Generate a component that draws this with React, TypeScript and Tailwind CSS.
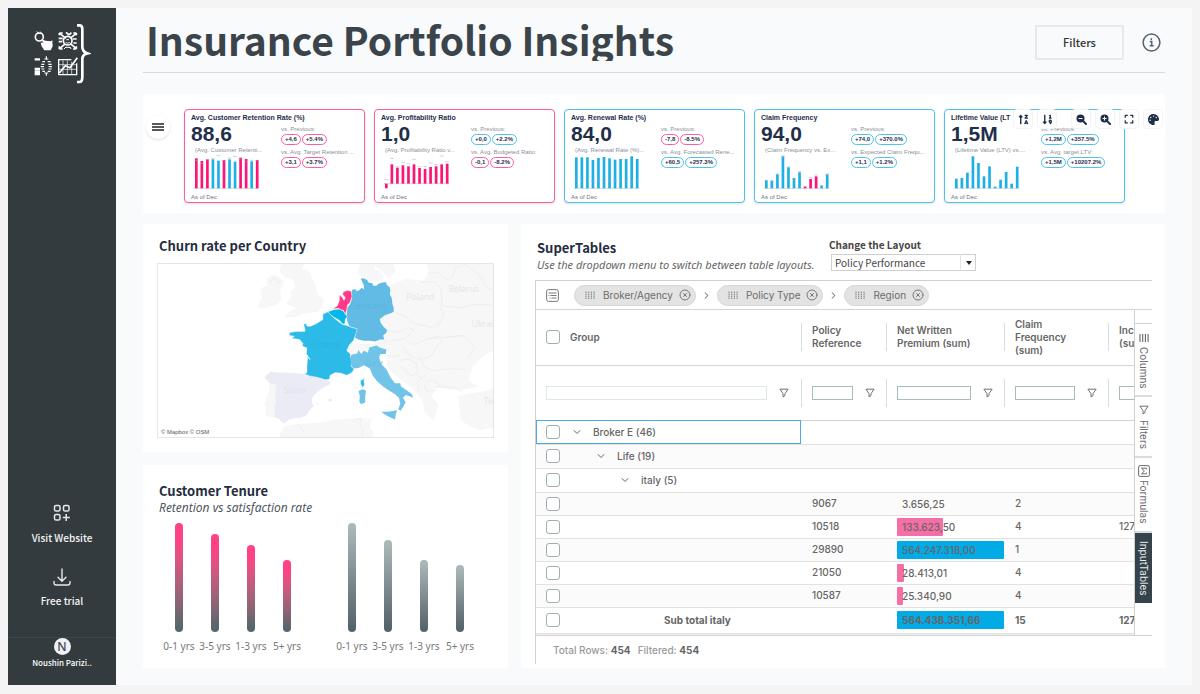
import React, { useState } from 'react';
import { FaExpand, FaPalette, FaSortAlphaUpAlt, FaSortNumericDown } from 'react-icons/fa';
import { ChevronDown, ChevronRight, CircleX } from 'lucide-react';

type Tone = 'pink' | 'blue';

interface Comparison {
  label: string;
  tone: Tone;
  values: string[];
}

interface Kpi {
  title: string;
  value: string;
  caption: string;
  tone: Tone;
  bars: number[];
  // one letter per bar: p = pink, b = blue
  tones: string;
  targets?: number[];
  comparisons: Comparison[];
}

const kpis: Kpi[] = [
  {
    title: 'Avg. Customer Retention Rate (%)',
    value: '88,6',
    caption: '(Avg. Customer Retenti...',
    tone: 'pink',
    bars: [90, 82, 87, 87, 83, 85, 87, 80, 92, 88, 81, 85],
    tones: 'pppbbpbbppbp',
    targets: [84, 75, 86, 90, 98, 83, 91, 96, 88, 80, 84, 83],
    comparisons: [
      { label: 'vs. Previous:', tone: 'pink', values: ['+4,6', '+5.4%'] },
      { label: 'vs. Avg. Target Retention ...', tone: 'pink', values: ['+3,1', '+3.7%'] },
    ],
  },
  {
    title: 'Avg. Profitability Ratio',
    value: '1,0',
    caption: '(Avg. Profitability Ratio v...',
    tone: 'pink',
    bars: [-14, 58, 48, 55, 52, 58, 47, 44, 50, 52, 58, 60],
    tones: 'pppppppppppp',
    targets: [12, 76, 51, 64, 60, 73, 51, 52, 62, 57, 83, 66],
    comparisons: [
      { label: 'vs. Previous:', tone: 'blue', values: ['+0,0', '+2.2%'] },
      { label: 'vs. Avg. Budgeted Ratio:', tone: 'pink', values: ['-0,1', '-8.2%'] },
    ],
  },
  {
    title: 'Avg. Renewal Rate (%)',
    value: '84,0',
    caption: '(Avg. Renewal Rate (%)...',
    tone: 'blue',
    bars: [93, 93, 93, 85, 91, 94, 90, 86, 88, 88, 96, 88],
    tones: 'bbbbbbbbbbbb',
    targets: [24, 23, 24, 22, 23, 24, 23, 24, 22, 22, 18, 24],
    comparisons: [
      { label: 'vs. Previous:', tone: 'pink', values: ['-7,8', '-8.5%'] },
      { label: 'vs. Avg. Forecasted Rene...', tone: 'blue', values: ['+60,5', '+257.3%'] },
    ],
  },
  {
    title: 'Claim Frequency',
    value: '94,0',
    caption: '(Claim Frequency vs. Ex...',
    tone: 'blue',
    bars: [24, 23, 42, 96, 63, 31, 48, 5, 28, 36, 8, 42],
    tones: 'bbbbbbbpppbb',
    targets: [24, 22, 43, 97, 64, 30, 50, 6, 32, 40, 8, 43],
    comparisons: [
      { label: 'vs. Previous:', tone: 'blue', values: ['+74,0', '+370.0%'] },
      { label: 'vs. Expected Claim Frequ...', tone: 'blue', values: ['+1,1', '+1.2%'] },
    ],
  },
  {
    title: 'Lifetime Value (LT',
    value: '1,5M',
    caption: '(Lifetime Value (LTV) vs....',
    tone: 'blue',
    bars: [29, 31, 47, 96, 76, 36, 66, 5, 26, 49, 14, 65],
    tones: 'bbbbbbbbbbbb',
    comparisons: [
      { label: 'vs. Previous:', tone: 'blue', values: ['+1,2M', '+357.5%'] },
      { label: 'vs. Avg. target LTV:', tone: 'blue', values: ['+1,5M', '+10207.2%'] },
    ],
  },
];

const borderTone: Record<Tone, string> = {
  pink: 'border-[#ff5c9f]',
  blue: 'border-[#4cc3ec]',
};

const MiniBars: React.FC<{ kpi: Kpi }> = ({ kpi }) => {
  const base = kpi.bars[0] < 0 ? 86 : 100;
  return (
    <svg viewBox="0 0 201 102" className="block h-[34px] w-[67px]">
      <path d={`M2 ${base}H199`} stroke="#c4c8cc" strokeWidth="2" />
      {kpi.bars.map((bar, i) => (
        <rect
          key={i}
          x={6 + i * 16.6}
          y={bar < 0 ? base : base - bar}
          width="8"
          height={Math.abs(bar)}
          fill={kpi.tones[i] === 'p' ? '#ff1377' : '#1cb0e6'}
        />
      ))}
      {kpi.targets?.map((t, i) => (
        <path key={i} d={`M${4 + i * 16.6} ${base - t}h12`} stroke="#a9aeb3" strokeWidth="1.6" />
      ))}
    </svg>
  );
};

const KpiCard: React.FC<{ kpi: Kpi }> = ({ kpi }) => (
  <article
    className={`h-[94px] min-w-0 flex-1 overflow-hidden rounded border bg-white px-[6px] pt-[3px] font-['Liberation_Sans',sans-serif] text-[#1f2f4a] shadow-sm ${borderTone[kpi.tone]}`}
  >
    <h3 className="text-[7px] leading-[10px] font-bold whitespace-nowrap">{kpi.title}</h3>
    <div className="flex">
      <div className="w-[90px] shrink-0">
        <p className="text-[21px] leading-[22px] font-bold">{kpi.value}</p>
        <p className="pl-[4px] text-[6px] leading-[10px] whitespace-nowrap text-[#8a8f98]">
          {kpi.caption}
        </p>
        <div className="pl-[2px]">
          <MiniBars kpi={kpi} />
        </div>
      </div>
      <div className="pt-px">
        {kpi.comparisons.map((c) => (
          <div key={c.label} className="h-[23px]">
            <p className="text-[6px] leading-[10px] whitespace-nowrap text-[#8a8f98]">{c.label}</p>
            <div className="flex gap-px">
              {c.values.map((v) => (
                <span
                  key={v}
                  className={`h-[11px] rounded-full border px-[3px] text-[6px] leading-[9px] font-bold ${borderTone[c.tone]}`}
                >
                  {v}
                </span>
              ))}
            </div>
          </div>
        ))}
      </div>
    </div>
    <p className="pt-1 text-[6px] leading-[8px] text-[#6f7682]">As of Dec</p>
  </article>
);

const toolButton =
  'flex size-5 items-center justify-center rounded border border-[#f1f5f9] bg-white text-[#1f2f4a]';

const Magnifier: React.FC<{ plus?: boolean }> = ({ plus }) => (
  <svg viewBox="0 0 11 11" className="size-[11px]">
    <circle cx="4.5" cy="4.5" r="4" fill="currentColor" />
    <path d="M7 7l3 3" stroke="currentColor" strokeWidth="2" strokeLinecap="round" />
    <path d={plus ? 'M2.5 4.5h4M4.5 2.5v4' : 'M2.5 4.5h4'} stroke="#fff" strokeWidth="1" />
  </svg>
);

const KpiToolbar = () => (
  <div className="absolute top-[15px] right-[2px] flex gap-1">
    <button type="button" aria-label="Sort descending" className={toolButton}>
      <FaSortAlphaUpAlt size={11} />
    </button>
    <button type="button" aria-label="Sort ascending" className={`${toolButton} mr-[10px]`}>
      <FaSortNumericDown size={11} />
    </button>
    <button type="button" aria-label="Zoom out" className={toolButton}>
      <Magnifier />
    </button>
    <button type="button" aria-label="Zoom in" className={toolButton}>
      <Magnifier plus />
    </button>
    <button type="button" aria-label="Full screen" className={toolButton}>
      <FaExpand size={10} />
    </button>
    <button type="button" aria-label="Theme" className={toolButton}>
      <FaPalette size={11} />
    </button>
  </div>
);

const Logo = () => (
  <svg viewBox="0 0 171 186" className="h-[62px] w-[57px]" fill="none" stroke="#fff">
    {/* magnifier and hand */}
    <circle cx="16" cy="42" r="12" strokeWidth="5" />
    <path d="M8 26l8 6M25 34l-6-8" strokeWidth="3" />
    <path d="M22 49l12 4 16 2 5-3 1 18-6 12H31l-8-12-3-10 5-2 4 3z" fill="#fff" stroke="none" />
    {/* network */}
    <path
      d="M76 30h10M118 30h9M76 78h10M117 78h10M76 30v7M127 30v7M76 70v8M127 70v8M78 32l18 14M126 32l-18 14M78 76l16-14M126 76l-17-14M74 46h12M74 56h10M116 48h12M118 60h10M96 28l10 8M106 36l6-7"
      strokeWidth="5"
    />
    <circle cx="101" cy="53" r="13" strokeWidth="5" />
    <path d="M97 50h8M95 58c4 3 8 3 12 0M94 73h16M90 78l6-6M112 78l-6-6" strokeWidth="3" />
    {/* nodes */}
    <path d="M2 109h16M2 138h16M2 146h16M2 153h16" strokeWidth="7" />
    <path d="M37 100v10M37 149v9M31 108h12M31 150h12M22 124h9M43 124h10M20 131h10M44 131h10M22 138h9M43 138h10M25 116h8M41 116h9M25 145h8M41 145h9" strokeWidth="3.5" />
    {/* chart */}
    <path d="M74 108v47h54v-34M74 110h38" strokeWidth="4" />
    <path d="M87 112v42M100 112v42M113 116v38M74 125h52M74 139h52" strokeWidth="2" />
    <path d="M76 150l18-22 14 6 22-30" strokeWidth="5" />
    {/* brace */}
    <path d="M129 7h7q9 0 9 11v53q0 15 15 20q-15 3-15 18v53q0 15-9 15h-7" strokeWidth="8" />
  </svg>
);

const Sidebar = () => (
  <aside className="flex w-[108px] shrink-0 flex-col items-center bg-[#343b3e] text-white">
    <a href="#home" aria-label="Home" className="mt-[15px]">
      <Logo />
    </a>
    <nav className="mt-auto flex flex-col items-center gap-[22px] text-[10px] leading-[14px] font-medium text-[#f4f5f5]">
      <a href="#website" className="flex flex-col items-center gap-[9px]">
        <svg viewBox="0 0 18 18" className="size-[18px]" fill="none" stroke="#e5e7eb" strokeWidth="1.5">
          <rect x="1.5" y="1.5" width="5.5" height="5.5" rx="1.6" />
          <rect x="10.5" y="1.5" width="5.5" height="5.5" rx="1.6" />
          <rect x="1.5" y="10.5" width="5.5" height="5.5" rx="1.6" />
          <path d="M13.2 10v7M9.8 13.5h7" />
        </svg>
        Visit Website
      </a>
      <a href="#trial" className="flex flex-col items-center gap-[7px]">
        <svg viewBox="0 0 20 20" className="size-5" fill="none" stroke="#e5e7eb" strokeWidth="1.4" strokeLinecap="round">
          <path d="M10 2v12M6 10.2l4 4 4-4M2 14.5v1.3q0 2.2 2.2 2.2h11.6q2.2 0 2.2-2.2v-1.3" />
        </svg>
        Free trial
      </a>
    </nav>
    <div className="mt-[29px] flex w-full flex-col items-center border-t border-[#3b4656] pb-4">
      <span className="flex size-[17px] items-center justify-center rounded-full bg-[#eff1f5] font-['Noto_Sans',sans-serif] text-[12px] font-medium text-[#3b4656]">
        N
      </span>
      <span className="pt-[2px] text-[8px] leading-[12px] font-medium">Noushin Parizi..</span>
    </div>
  </aside>
);

const EuropeMap = () => (
  <svg
    viewBox="50 130 1012 523"
    className="block w-full border border-[#e6e6e6] bg-white"
    role="img"
    aria-label="Churn rate by European country"
    fontFamily="'Noto Sans', sans-serif"
  >
    <g fill="#f7f7f7" stroke="#f2f2f2" strokeWidth="1.5">
      <path d="M384 170l18-6 20 12 6 10-10 22 4 30-14 14-26 6-20 6-8-10 12-20-4-18 6-16 16-4-6-14z" />
      <path d="M424 130h66l-6 16 20 4 16 34 12 38 18 14-6 26-12 12-26 2-24 4-16 8-28 4-4-6 22-16 20-4-20-8-16-8 14-20-2-16 14-12-8-26-26-8-14-18z" />
      <path d="M660 130h40l6 20 14 2 10 20-18 12-18-4-10 6-14-10-14-22zM700 130h60l6 24-20 18-12-16z" />
      <path d="M754 196l46-20 50 6 20-22-6-30h198v260l-34 20-28 30-14 40 26 20-50 10-44-4-34-4-8 30 20 24-14 44-24-20-8-40-26-32-40-30-34-28-8-20 4-22 10-8-24-16-40 10-14 12-12-10-14 10-24-2-20 2 10-22 16-14 26 2 40 2 16-8-4-14 16-16-24-40 16-16 26-12z" />
      <path d="M416 653l14-30 40-8 60-4 60-10 70-4 34 2-6 24 14 18-8 12z" />
      <path d="M958 530l40-8 64-12v112l-40 8-30-10-26-20z" />
      <path d="M388 490l16 2 4 8-4 20 2 26-4 14 2 16-2 16-26-4 4-28-8-2 6-24 8-16z" />
    </g>
    <g fill="none" stroke="#ececec" strokeWidth="2.5">
      <path d="M842 184h46l16 20 4 30-4 30 12 20-22 36M864 158l30-4 28 24 16-8 10-28 24-8M908 256l50 6 52-10 50 2M972 130l30 16 26 26 10 24 24 14M762 274l34 14 24 20 60 14 16-18" />
      <path d="M720 296l24-12M742 330l34 6 30-14 18 6-26 28-40 4-24 6M800 360l20 14 46-18 30-8 14 8-36 52-34 12-30-14-20-24M866 356l44-4 60-6 26 24 12 12-8 8-12 24M910 352l56-6M780 404l-20 6-22-4M780 420l30-2 20 12 4 24-14 16-20-14-16-16M840 408l14 34 30 10 60-6 38 4M830 462l18 14 14-14M848 476l-14 10 4 32M862 486l20-6 18 16-14 16-24 2-8-18M900 500l50 4 20 12M646 600l16-4-2 20 12 18-8 18M480 620l12 20M390 184l12-14 10 18 8-6" />
    </g>
    <path
      fill="#eaebf4"
      d="M378 466L390 454 404 458 430 458 464 460 496 462 520 470 550 480 570 484 568 494 552 502 534 514 518 530 514 546 520 560 508 572 500 586 484 594 462 596 446 600 432 612 424 608 418 600 402 592 404 576 402 560 406 546 404 520 408 500 404 492 388 490 372 474ZM562 541l8-5 7 5-6 6zM530 552l4-2v5z"
    />
    <path
      fill="#62bbe4"
      d="M636 208L648 206 650 212 660 208 664 202 672 206 672 196 668 186 662 174 672 174 682 178 686 186 698 188 700 196 710 196 716 190 728 186 738 184 742 194 750 200 752 210 750 222 756 232 758 250 762 262 762 274 755 278 735 285 720 296 722 306 730 318 742 330 740 338 730 346 734 358 720 358 706 364 690 362 672 362 655 358 645 352 648 338 652 326 640 322 628 318 622 304 620 284 622 262 632 250 636 232Z"
    />
    <g stroke="#fff" strokeWidth="1.2" strokeLinejoin="round">
      <path
        fill="#2cbae8"
        d="M564 274L548 282 548 298 532 308 520 314 510 318 500 318 498 310 490 312 494 326 494 334 480 334 466 334 446 338 448 346 462 348 454 354 478 358 488 370 486 378 500 384 498 400 510 420 502 412 500 440 500 458 494 462 508 468 530 472 556 480 568 478 570 466 586 458 604 460 620 466 636 458 642 448 634 440 634 420 630 400 620 392 628 374 640 362 646 346 652 326 636 322 620 316 606 312 590 300 576 288ZM674 470L672 484 674 494 668 504 662 492 662 482 670 478Z"
      />
      <path fill="#03b7ea" d="M564 274L580 268 598 266 610 272 618 284 622 290 616 296 614 312 606 310 598 300 584 292 572 284Z" />
      <path
        fill="#ff3a86"
        d="M610 214L622 210 634 212 636 228 630 246 622 254 620 268 616 282 610 270 604 268 594 264 578 266 592 256 598 240 598 224 606 230 612 240 616 232 608 222Z"
      />
    </g>
    <path
      fill="#71c3e8"
      d="M634 404L652 400 656 390 664 402 672 392 684 398 688 382 710 376 720 382 740 388 738 402 722 402 718 412 724 432 740 448 752 472 766 490 782 490 784 500 802 512 818 524 820 534 812 530 798 526 790 534 798 548 792 560 782 574 776 568 782 552 778 534 764 522 744 510 730 500 712 484 698 466 690 446 672 436 656 444 640 446 634 436 632 420ZM724 576L744 576 772 572 768 586 766 600 752 594 738 586ZM656 514L668 508 678 512 676 530 676 548 664 554 658 546 660 532Z"
    />
    <g fontSize="26">
      <g fill="#e6e6e6">
        <text x="800" y="239">Poland</text>
        <text x="928" y="215">Belarus</text>
        <text x="997" y="319">Ukrai</text>
        <text x="1034" y="552">Tu</text>
      </g>
      <text x="430" y="520" fill="#e1e2ee">Spain</text>
      <text x="518" y="385" fill="#29b2e0">France</text>
      <text x="628" y="267" fill="#5bb3dc">Germany</text>
      <text x="676" y="437" fill="#6abce2">Italy</text>
    </g>
    <text x="59" y="645" fontSize="18" fill="#555" fontFamily="'Liberation Sans', sans-serif">
      © Mapbox © OSM
    </text>
  </svg>
);

const tenures = ['0-1 yrs', '3-5 yrs', '1-3 yrs', '5+ yrs'];

const TenureChart: React.FC<{ heights: number[]; bar: string; label: string }> = ({ heights, bar, label }) => (
  <div role="img" aria-label={label} className="grid w-[144px] grid-cols-4">
    {heights.map((h, i) => (
      <div key={i} className="flex flex-col items-center">
        <div className="flex h-[110px] items-end">
          <div className={`w-2 rounded-full bg-gradient-to-b ${bar}`} style={{ height: h }} />
        </div>
        <span className="pt-[7px] font-['Noto_Sans',sans-serif] text-[10px] leading-[14px] whitespace-nowrap text-[#787878]">
          {tenures[i]}
        </span>
      </div>
    ))}
  </div>
);

const FunnelIcon = () => (
  <svg viewBox="0 0 10 10" className="size-[10px] shrink-0" fill="none" stroke="#6b7072">
    <path d="M.9 1.2h8.2L6 5.6v2L4 8.9V5.6z" />
  </svg>
);

const GripIcon = () => (
  <svg viewBox="0 0 10 9" className="h-[9px] w-[10px] shrink-0" stroke="#8a8d8f" strokeWidth="1.1" strokeDasharray="1.4 .6">
    <path d="M1 .5v8M3.7 .5v8M6.4 .5v8M9.1 .5v8" />
  </svg>
);

const GroupChip: React.FC<{ name: string }> = ({ name }) => (
  <span className="flex h-[21px] items-center rounded-full border border-[#d6d6d6] bg-[#e3e3e3] pr-[4px] pl-[10px] text-[10px] text-[#6b6b6b]">
    <GripIcon />
    <span className="pr-[6px] pl-[8px] whitespace-nowrap">{name}</span>
    <button type="button" aria-label={`Remove ${name}`}>
      <CircleX size={12} strokeWidth={1.8} />
    </button>
  </span>
);

const CheckBox: React.FC<{ label: string }> = ({ label }) => (
  <input
    type="checkbox"
    aria-label={label}
    className="block size-[14px] shrink-0 appearance-none rounded-[3px] border border-[#9fb0b0] bg-white"
  />
);

interface Row {
  kind: 'group' | 'leaf' | 'total';
  name?: string;
  indent?: string;
  policy?: string;
  premium?: string;
  fill?: number;
  fillTone?: string;
  claims?: string;
  incurred?: string;
}

const rows: Row[] = [
  { kind: 'group', name: 'Broker E (46)', indent: 'pl-[11px]' },
  { kind: 'group', name: 'Life (19)', indent: 'pl-[35px]' },
  { kind: 'group', name: 'italy (5)', indent: 'pl-[59px]' },
  { kind: 'leaf', policy: '9067', premium: '3.656,25', claims: '2' },
  { kind: 'leaf', policy: '10518', premium: '133.623,50', fill: 43, fillTone: 'bg-[#f56fa6]', claims: '4', incurred: '127' },
  { kind: 'leaf', policy: '29890', premium: '564.247.318,00', fill: 100, fillTone: 'bg-[#02aae6]', claims: '1' },
  { kind: 'leaf', policy: '21050', premium: '28.413,01', fill: 7, fillTone: 'bg-[#f56fa6]', claims: '4' },
  { kind: 'leaf', policy: '10587', premium: '25.340,90', fill: 6, fillTone: 'bg-[#f56fa6]', claims: '4' },
  { kind: 'total', name: 'Sub total italy', premium: '564.438.351,66', fill: 100, fillTone: 'bg-[#02aae6]', claims: '15', incurred: '127' },
];

const rowStyles: Record<Row['kind'], string> = {
  group: 'h-6 font-medium',
  leaf: 'h-[23px] font-medium',
  total: 'h-[26px] font-bold',
};

const columns = [
  { lines: ['Policy', 'Reference'], filter: true },
  { lines: ['Net Written', 'Premium (sum)'], filter: true },
  { lines: ['Claim', 'Frequency', '(sum)'], filter: true },
  { lines: ['Inc', '(su'], filter: false },
];

const PolicyTable = () => (
  <table className="w-full table-fixed border-collapse text-left text-[10px] text-[#666]">
    <colgroup>
      <col />
      <col className="w-[85px]" />
      <col className="w-[118px]" />
      <col className="w-[104px]" />
      <col className="w-[26px]" />
    </colgroup>
    <thead>
      <tr className="h-[55px] border-b border-[#d5d5d5]">
        <th scope="col" className="p-0 font-semibold">
          <div className="flex items-center gap-[10px] pl-[10px]">
            <CheckBox label="Select all rows" />
            Group
          </div>
        </th>
        {columns.map((c) => (
          <th key={c.lines[0]} scope="col" className="p-0 font-semibold">
            <div className="flex h-7 items-center border-l border-[#d9dede] pl-[10px] leading-[13px] whitespace-nowrap">
              <span>
                {c.lines.map((line) => (
                  <span key={line} className="block">
                    {line}
                  </span>
                ))}
              </span>
            </div>
          </th>
        ))}
      </tr>
      <tr className="h-[55px] border-b border-[#d5d5d5]">
        <td className="p-0">
          <div className="flex items-center gap-3 pr-[12px] pl-[10px]">
            <input type="text" aria-label="Filter by group" className="h-[14px] min-w-0 flex-1 border border-[#dfe6e6] px-1" />
            <FunnelIcon />
          </div>
        </td>
        {columns.map((c) => (
          <td key={c.lines[0]} className="p-0">
            <div className="flex h-7 items-center gap-3 border-l border-[#d9dede] pl-[10px]">
              <input
                type="text"
                aria-label={`Filter by ${c.lines.join(' ')}`}
                className={`h-[14px] min-w-0 border border-[#a6bcbc] px-1 ${c.filter ? 'flex-1' : 'w-10 shrink-0'}`}
              />
              {c.filter && (
                <span className="pr-[11px]">
                  <FunnelIcon />
                </span>
              )}
            </div>
          </td>
        ))}
      </tr>
    </thead>
    <tbody>
      {rows.map((row, i) => (
        <tr key={i} className={`border-b border-[#e2e2e2] ${rowStyles[row.kind]} ${i % 2 ? 'bg-[#fbfbfb]' : 'bg-white'}`}>
          <td className={`p-0 ${i === 0 ? 'outline outline-[#4ba9ea] -outline-offset-1' : ''}`}>
            <div className="flex items-center pl-[10px]">
              <CheckBox label={`Select ${row.name ?? row.policy}`} />
              {row.kind === 'group' && (
                <div className={`flex items-center ${row.indent}`}>
                  <button type="button" aria-label={`Collapse ${row.name}`}>
                    <ChevronDown size={12} strokeWidth={2} />
                  </button>
                  <span className="pl-[10px]">{row.name}</span>
                </div>
              )}
              {row.kind === 'total' && <span className="pl-[104px]">{row.name}</span>}
            </div>
          </td>
          <td className="p-0 pl-[11px]">{row.policy}</td>
          <td className="p-0 pl-[11px]">
            {row.premium && (
              <div className="relative h-[18px] px-[5px] leading-[18px]">
                {row.fill && (
                  <div className={`absolute inset-y-0 left-0 rounded-[1px] ${row.fillTone}`} style={{ width: `${row.fill}%` }} />
                )}
                <span className="relative">{row.premium}</span>
              </div>
            )}
          </td>
          <td className="p-0 pl-[11px]">{row.claims}</td>
          <td className="p-0 pl-[11px]">{row.incurred}</td>
        </tr>
      ))}
    </tbody>
  </table>
);

const sideTab =
  'flex w-full flex-col items-center border-b-2 border-[#dcdcdc] text-[10px] leading-[14px] text-[#6b6b6b]';

const SideTabs = () => (
  <div className="flex w-[18px] shrink-0 flex-col border-l border-[#d0d0d0]">
    <div className="h-[14px] w-full border-b border-[#d5d5d5]" />
    <button type="button" className={`${sideTab} h-[73px] pt-[10px]`}>
      <svg viewBox="0 0 10 8" className="h-2 w-[10px] shrink-0" stroke="#6b6b6b" strokeWidth="1.1">
        <path d="M1 0v8M3.7 0v8M6.4 0v8M9.1 0v8" />
      </svg>
      <span className="pt-[5px] [writing-mode:vertical-rl]">Columns</span>
    </button>
    <button type="button" className={`${sideTab} h-[61px] pt-[8px]`}>
      <FunnelIcon />
      <span className="pt-[5px] [writing-mode:vertical-rl]">Filters</span>
    </button>
    <button type="button" className={`${sideTab} h-[75px] pt-[7px]`}>
      <svg viewBox="0 0 12 12" className="size-3 shrink-0" fill="none" stroke="#6b6b6b">
        <rect x=".6" y=".6" width="10.8" height="10.8" rx="1.5" />
        <path d="M8.5 4.4V3.2h-5L6.4 6 3.5 8.8h5V7.6" />
      </svg>
      <span className="pt-[3px] [writing-mode:vertical-rl]">Formulas</span>
    </button>
    <button type="button" className="flex h-[70px] w-full items-center justify-center bg-[#35434b] text-[10px] leading-[14px] text-[#e8ecee]">
      <span className="[writing-mode:vertical-rl]">InputTables</span>
    </button>
  </div>
);

const SuperTables = () => {
  const [layout, setLayout] = useState<string>('Policy Performance');

  return (
    <section className="min-w-0 flex-1 bg-white pt-[13px] pr-[13px] pb-[4px] pl-[14px]">
      <div className="flex h-[43px] items-start">
        <div className="w-[294px] pt-[2px] pl-[2px]">
          <h2 className="text-[13px] leading-[18px] font-bold text-[#252d40]">SuperTables</h2>
          <p className="font-['Noto_Sans',sans-serif] text-[11px] leading-[15px] whitespace-nowrap text-[#666] italic">
            Use the dropdown menu to switch between table layouts.
          </p>
        </div>
        <div>
          <label htmlFor="layout" className="block text-[10px] leading-[15px] font-bold text-[#444]">
            Change the Layout
          </label>
          <div className="relative mt-[2px] ml-[2px] w-[145px]">
            <select
              id="layout"
              value={layout}
              onChange={(e) => setLayout(e.target.value)}
              className="block h-[17px] w-full appearance-none border border-[#d0d0d0] bg-white pl-[3px] text-[10px] leading-[15px] text-[#444]"
            >
              <option>Policy Performance</option>
            </select>
            <span className="pointer-events-none absolute inset-y-0 right-0 flex w-4 items-center justify-center border-l border-[#e3e3e3]">
              <svg viewBox="0 0 6 4" className="h-1 w-[6px]" fill="#222">
                <path d="M0 0h6L3 4z" />
              </svg>
            </span>
          </div>
        </div>
      </div>

      <div className="border-t border-l border-[#d0d0d0] font-['Inter',sans-serif]">
        <div className="flex h-[29px] items-center border-b border-[#d5d5d5] pl-[10px]">
          <svg viewBox="0 0 13 13" className="mr-[15px] size-[13px]" fill="none" stroke="#777">
            <rect x=".6" y=".6" width="11.8" height="11.8" rx="2" />
            <path d="M2.5 4h8M4.5 6.5h6M5.5 9h5M2.5 6.5h1M3.5 9h1" />
          </svg>
          <div className="flex items-center gap-[5px]">
            <GroupChip name="Broker/Agency" />
            <ChevronRight size={11} strokeWidth={2.2} color="#777" />
            <GroupChip name="Policy Type" />
            <ChevronRight size={11} strokeWidth={2.2} color="#777" />
            <GroupChip name="Region" />
          </div>
        </div>
        <div className="flex border-b border-[#d5d5d5]">
          <div className="min-w-0 flex-1 overflow-hidden border-b border-[#ededed]">
            <PolicyTable />
          </div>
          <SideTabs />
        </div>
        <p className="h-7 pl-[17px] text-[10px] leading-7 font-medium text-[#9a9a9a]">
          Total Rows: <b className="text-[#666]">454</b>
          <span className="pl-[7px]">
            Filtered: <b className="text-[#666]">454</b>
          </span>
        </p>
      </div>
    </section>
  );
};

const App: React.FC = () => {
  return (
    <div className="flex min-h-screen bg-[#f4f4f4] p-2 pb-[9px] font-['Noto_Sans_CJK_JP',sans-serif]">
      <Sidebar />
      <main className="min-w-0 flex-1 bg-[#f8fafc] pr-[27px] pl-[27px]">
        <header className="flex h-[65px] items-start justify-between border-b border-[#d8dbde]">
          <h1 className="h-[53px] overflow-hidden pl-[3px] text-[39px] leading-[62px] font-bold whitespace-nowrap text-[#3a444a]">
            Insurance Portfolio Insights
          </h1>
          <div className="flex items-center gap-[18px] pt-[17px] pr-[4px]">
            <button
              type="button"
              className="h-[35px] w-[89px] rounded-[2px] border-2 border-[#e7e8ea] text-[11px] font-medium text-[#333]"
            >
              Filters
            </button>
            <button type="button" aria-label="Information">
              <svg viewBox="0 0 19 19" className="size-[19px]" fill="none" stroke="#566071" strokeWidth="1.5">
                <circle cx="9.5" cy="9.5" r="8.4" />
                <path d="M7.8 8.6h1.9v4M7.6 12.8h4M9.3 5.2v1.7" />
              </svg>
            </button>
          </div>
        </header>

        {/* KPI strip */}
        <section className="relative mt-[21px] flex h-[119px] bg-white pt-[15px] pr-10 pl-[3px]">
          <button
            type="button"
            aria-label="Menu"
            className="mt-[6px] mr-[14px] flex size-6 shrink-0 items-center justify-center rounded-full bg-white shadow-sm"
          >
            <svg viewBox="0 0 12 8" className="h-2 w-3" stroke="#222" strokeWidth="1.4">
              <path d="M0 1h12M0 4h12M0 7h12" />
            </svg>
          </button>
          <div className="flex min-w-0 flex-1 gap-[9px]">
            {kpis.map((kpi) => (
              <KpiCard key={kpi.title} kpi={kpi} />
            ))}
          </div>
          <KpiToolbar />
        </section>

        <div className="mt-[11px] flex gap-[13px]">
          <div className="flex w-[365px] shrink-0 flex-col gap-[13px]">
            <section className="h-[228px] bg-white px-[14px] pt-[13px]">
              <h2 className="pb-[8px] pl-[2px] text-[13px] leading-[18px] font-bold text-[#252d40]">
                Churn rate per Country
              </h2>
              <EuropeMap />
            </section>
            <section className="flex-1 bg-white px-4 pt-[17px]">
              <h2 className="text-[13px] leading-[18px] font-bold text-[#252d40]">Customer Tenure</h2>
              <p className="font-['Noto_Sans',sans-serif] text-[12px] leading-[15px] text-[#52565c] italic">
                Retention vs satisfaction rate
              </p>
              <div className="flex gap-[29px] pl-[2px] pt-[7px]">
                <TenureChart
                  label="Retention rate by tenure"
                  heights={[109, 98, 87, 72]}
                  bar="from-[#ff4186] from-15% to-[#56666d] to-95%"
                />
                <TenureChart
                  label="Satisfaction rate by tenure"
                  heights={[109, 92, 72, 67]}
                  bar="from-[#aab7b7] from-5% to-[#56646c] to-95%"
                />
              </div>
            </section>
          </div>
          <SuperTables />
        </div>
      </main>
    </div>
  );
};

export default App;
